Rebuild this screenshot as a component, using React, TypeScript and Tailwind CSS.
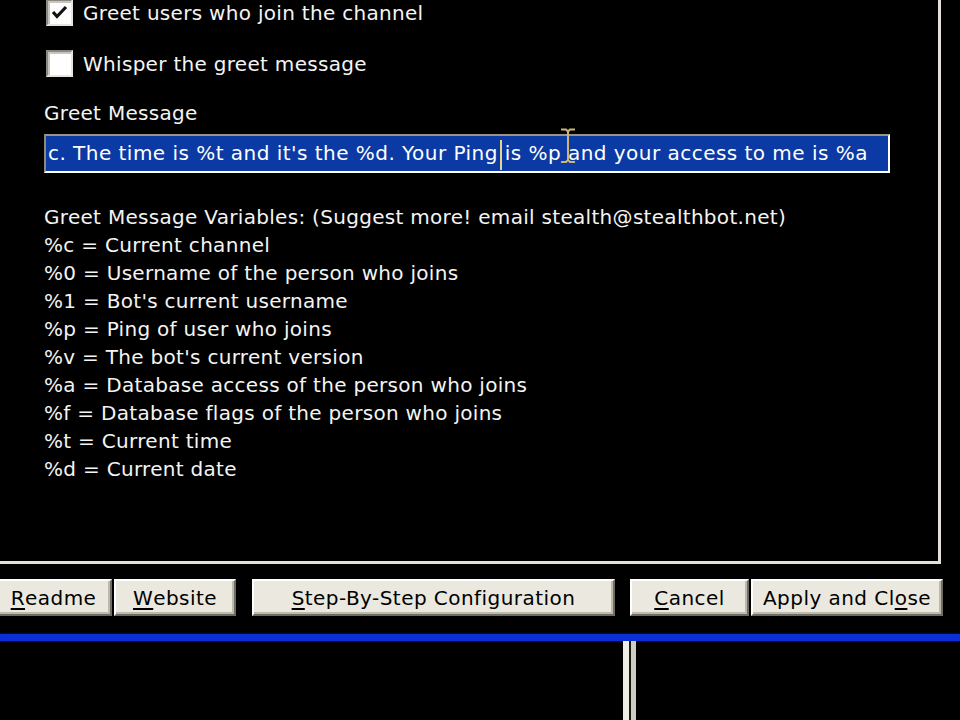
import React from 'react';

const font = "font-['DejaVu_Sans','Liberation_Sans',sans-serif]";

function CheckBox({ checked }: { checked?: boolean }) {
  return (
    <div className="relative w-[27px] h-[27px] shrink-0 bg-white border-2 border-t-[#8a8880] border-l-[#8a8880] border-b-[#e6e4dc] border-r-[#e6e4dc] shadow-[inset_2px_2px_0_#c9c7bd]">
      {checked && (
        <svg viewBox="0 0 23 23" className="absolute inset-0 w-full h-full">
          <path d="M5 11 L9 15.5 L18 6" fill="none" stroke="#111" strokeWidth="3.2" strokeLinejoin="miter" />
        </svg>
      )}
    </div>
  );
}

function XpButton({ width, children }: { width: string; children: React.ReactNode }) {
  return (
    <button
      className={`${width} h-[37px] shrink-0 bg-[#ebe9df] text-black text-[20px] leading-[28px] tracking-[0.45px] border-2 border-t-white border-l-white border-b-[#6f6d63] border-r-[#6f6d63] shadow-[inset_-2px_-2px_0_#bdbaac] flex items-center justify-center`}
    >
      {children}
    </button>
  );
}

function U({ children }: { children: React.ReactNode }) {
  return <span className="underline underline-offset-[3px] decoration-[2px]">{children}</span>;
}

const variables = [
  'Greet Message Variables: (Suggest more! email stealth@stealthbot.net)',
  '%c = Current channel',
  '%0 = Username of the person who joins',
  "%1 = Bot's current username",
  '%p = Ping of user who joins',
  "%v = The bot's current version",
  '%a = Database access of the person who joins',
  '%f = Database flags of the person who joins',
  '%t = Current time',
  '%d = Current date',
];

export default function App(): JSX.Element {
  return (
    <div className={`${font} w-[960px] h-[720px] bg-black overflow-hidden flex flex-col text-[20px] tracking-[0.3px] text-[#f4f4f4]`}>
      {/* greet settings panel */}
      <section className="relative w-[941px] h-[564px] shrink-0 pl-[44px] border-r-[3px] border-b-[3px] border-[#e4e2d8]">
        <div className="flex items-center gap-[10px] h-[27px] mt-[-1px] ml-[2px]">
          <CheckBox checked />
          <span className="leading-[28px]">Greet users who join the channel</span>
        </div>
        <div className="flex items-center gap-[10px] h-[27px] mt-[24px] ml-[2px]">
          <CheckBox />
          <span className="leading-[28px]">Whisper the greet message</span>
        </div>
        <div className="mt-[22px] leading-[28px]">Greet Message</div>
        <div className="relative mt-[7px] w-[846px] h-[39px] bg-[#0b3aa4] border-2 border-t-[#9a9480] border-l-[#8c887a] border-b-white border-r-white pl-[2px] pt-[3px] leading-[28px] tracking-[0.47px] text-white whitespace-nowrap">
          c. The time is %t and it's the %d. Your Ping
          <span className="relative">
            {' '}
            <span className="absolute left-[2px] top-[-1px] w-[2px] h-[30px] bg-[#e6d68c]" />
          </span>
          is %p and your access to me is %a
          <svg viewBox="0 0 16 36" className="absolute left-[514px] top-[-8px] w-[16px] h-[36px]">
            <path d="M1 1.5 H6 L8 3.5 L10 1.5 H15 M8 3.5 V32 M1 34 H6 L8 32 L10 34 H15" fill="none" stroke="#cbb677" strokeWidth="2" />
          </svg>
        </div>
        <div className="mt-[30px]">
          {variables.map((line) => (
            <div key={line} className="leading-[28px] whitespace-nowrap">
              {line}
            </div>
          ))}
        </div>
      </section>

      {/* dialog buttons */}
      <div className="flex mt-[15px] ml-[-5px]">
        <XpButton width="w-[117px]"><U>R</U>eadme</XpButton>
        <div className="w-[2px]" />
        <XpButton width="w-[122px]"><U>W</U>ebsite</XpButton>
        <div className="w-[16px]" />
        <XpButton width="w-[363px]"><U>S</U>tep-By-Step Configuration</XpButton>
        <div className="w-[15px]" />
        <XpButton width="w-[119px]"><U>C</U>ancel</XpButton>
        <div className="w-[2px]" />
        <XpButton width="w-[192px]">Apply and Cl<U>o</U>se</XpButton>
      </div>

      <div className="mt-[18px] h-[7px] shrink-0 bg-[#0b2ed6] shadow-[0_0_3px_#0a22a0]" />

      {/* splitter */}
      <div className="flex-1 flex pl-[623px]">
        <div className="w-[6px] bg-[#eeede6]" />
        <div className="w-[2px] bg-[#1a1a18]" />
        <div className="w-[5px] bg-[#cfcdc2]" />
      </div>
    </div>
  );
}
